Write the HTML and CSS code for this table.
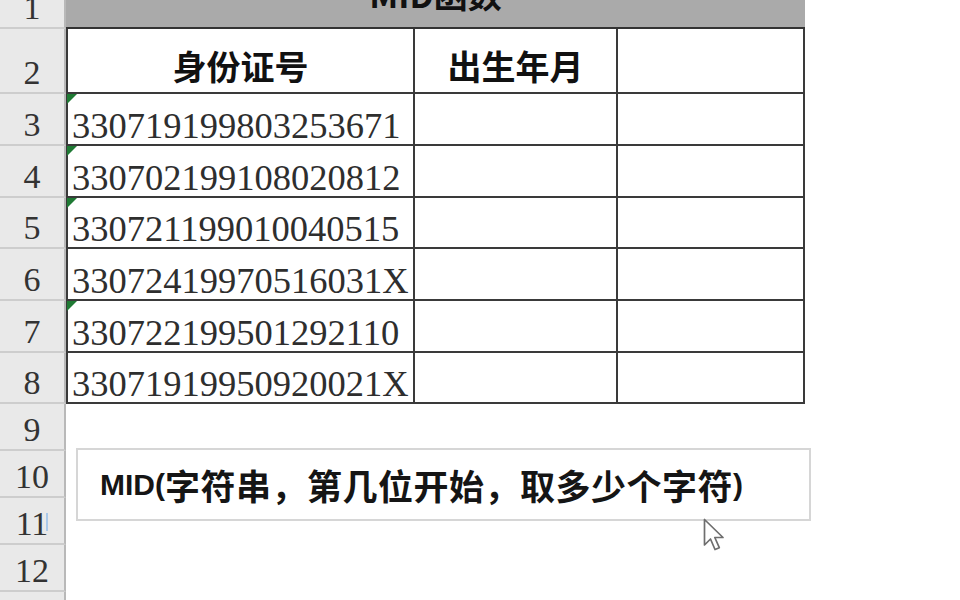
FILE: index.html
```html
<!DOCTYPE html>
<html lang="zh-CN">
<head>
<meta charset="utf-8">
<title>MID函数</title>
<link rel="stylesheet" href="styles.css">
</head>
<body>
<div class="sheet">
  <div class="rh">1</div>
  <div class="title">MID函数</div>
  <div class="blank-cell"></div>

  <div class="rh">2</div>
  <div class="c a hd">身份证号</div>
  <div class="c hd">出生年月</div>
  <div class="c"></div>
  <div class="blank-cell"></div>

  <div class="rh">3</div>
  <div class="c a id warn">330719199803253671</div>
  <div class="c"></div>
  <div class="c"></div>
  <div class="blank-cell"></div>

  <div class="rh">4</div>
  <div class="c a id warn">330702199108020812</div>
  <div class="c"></div>
  <div class="c"></div>
  <div class="blank-cell"></div>

  <div class="rh">5</div>
  <div class="c a id warn">330721199010040515</div>
  <div class="c"></div>
  <div class="c"></div>
  <div class="blank-cell"></div>

  <div class="rh">6</div>
  <div class="c a id">33072419970516031X</div>
  <div class="c"></div>
  <div class="c"></div>
  <div class="blank-cell"></div>

  <div class="rh">7</div>
  <div class="c a id warn">330722199501292110</div>
  <div class="c"></div>
  <div class="c"></div>
  <div class="blank-cell"></div>

  <div class="rh">8</div>
  <div class="c a id">33071919950920021X</div>
  <div class="c"></div>
  <div class="c"></div>
  <div class="blank-cell"></div>

  <div class="rh">9</div>
  <div class="blank-row"></div>
  <div class="rh">10</div>
  <div class="blank-row"></div>
  <div class="rh">11</div>
  <div class="blank-row"></div>
  <div class="rh">12</div>
  <div class="blank-row"></div>
  <div class="rh"></div>
  <div class="blank-row"></div>

  <div class="caret"></div>

  <div class="textbox"><span class="fn">MID(</span><span class="zh">字符串，第几位开始，取多少个字符</span><span class="fn">)</span></div>

  <svg class="cursor" width="26" height="36" viewBox="0 0 26 36">
    <path d="M1.5 1.5 L1.5 27 L7.5 21 L12 31.5 L16.3 29.7 L11.8 19.5 L20 19.5 Z" fill="#ffffff" stroke="#6e6e6e" stroke-width="1.7" stroke-linejoin="round"/>
  </svg>
</div>
</body>
</html>
```

FILE: styles.css
```css
html, body {
  margin: 0;
  padding: 0;
  background: #ffffff;
  overflow: hidden;
}

body {
  font-family: "Liberation Serif", serif;
  color: #2e2e2e;
}

.sheet {
  position: relative;
  margin-top: -23px;
  display: grid;
  grid-template-columns: 66px 349px 203px 187px 1fr;
  grid-template-rows: 52px 65px 52px 52px 51px 52px 52px 51px 47px 47px 47px 47px 60px;
}

.rh {
  box-sizing: border-box;
  background: #e9e9e9;
  border-right: 2px solid #b9b9b9;
  border-bottom: 2px solid #cdcdcd;
  display: flex;
  align-items: flex-end;
  justify-content: center;
  font-family: "Liberation Serif", serif;
  font-size: 34px;
  line-height: 34px;
  color: #333333;
  padding-bottom: 2px;
}

.title {
  grid-column: 2 / 5;
  box-sizing: border-box;
  background: #aaaaaa;
  border-bottom: 2px solid #333333;
  display: flex;
  justify-content: center;
  align-items: flex-start;
  padding-top: 0;
  font-family: "Noto Sans CJK SC", "Noto Sans", sans-serif;
  font-weight: bold;
  font-size: 34px;
  line-height: 34px;
  color: #111111;
}

.blank-cell {
  background: #ffffff;
}

.blank-row {
  grid-column: 2 / -1;
  background: #ffffff;
}

.c {
  box-sizing: border-box;
  position: relative;
  background: #ffffff;
  border-right: 2px solid #3a3a3a;
  border-bottom: 2px solid #3a3a3a;
}

.a {
  border-left: 2px solid #3a3a3a;
}

.hd {
  display: flex;
  justify-content: center;
  align-items: center;
  padding-top: 10px;
  font-family: "Noto Sans CJK SC", "Noto Sans", sans-serif;
  font-weight: bold;
  font-size: 34px;
  line-height: 34px;
  color: #111111;
}

.id {
  display: flex;
  align-items: flex-end;
  padding-left: 4px;
  font-family: "Liberation Serif", serif;
  font-size: 36.5px;
  line-height: 36px;
  color: #2e2e2e;
}

.warn::before {
  content: "";
  position: absolute;
  left: -1px;
  top: 0;
  width: 0;
  height: 0;
  border-top: 10px solid #1f7a34;
  border-right: 10px solid transparent;
}

.caret {
  position: absolute;
  left: 46px;
  top: 536px;
  width: 2px;
  height: 18px;
  background: #a9c9ea;
}

.textbox {
  position: absolute;
  left: 76px;
  top: 471px;
  width: 735px;
  height: 73px;
  box-sizing: border-box;
  border: 2px solid #d6d6d6;
  background: #ffffff;
  display: flex;
  align-items: center;
  padding-left: 22px;
  color: #151515;
  white-space: nowrap;
}

.fn {
  font-family: "Liberation Sans", Arial, sans-serif;
  font-weight: bold;
  font-size: 30px;
}

.zh {
  font-family: "Noto Sans CJK SC", sans-serif;
  font-weight: bold;
  font-size: 35px;
  letter-spacing: 0.5px;
}

.cursor {
  position: absolute;
  left: 703px;
  top: 541px;
}
```
